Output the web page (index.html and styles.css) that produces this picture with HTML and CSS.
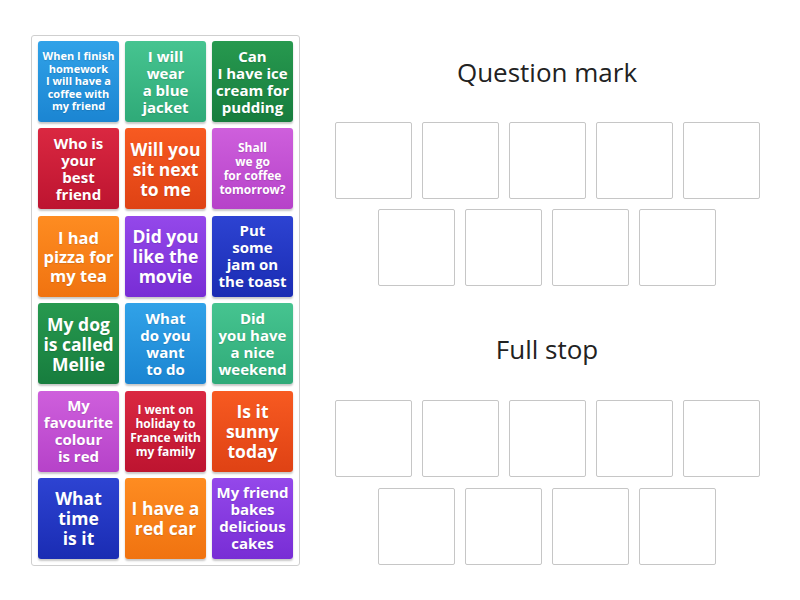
FILE: index.html
```html
<!DOCTYPE html>
<html lang="en">
<head>
    <meta charset="UTF-8">
    <meta name="viewport" content="width=device-width, initial-scale=1.0">
    <title>Question mark or full stop</title>
    <link rel="stylesheet" href="styles.css">
</head>
<body>
    <div class="activity">
        <div class="tray">
            <div class="card blue fit-xs">When I finish<br>homework<br>I will have a<br>coffee with<br>my friend</div>
            <div class="card teal fit-md">I will<br>wear<br>a blue<br>jacket</div>
            <div class="card forest fit-md">Can<br>I have ice<br>cream for<br>pudding</div>

            <div class="card crimson fit-md">Who is<br>your<br>best<br>friend</div>
            <div class="card flame fit-xl">Will you<br>sit next<br>to me</div>
            <div class="card orchid fit-sm">Shall<br>we go<br>for coffee<br>tomorrow?</div>

            <div class="card orange fit-lg">I had<br>pizza for<br>my tea</div>
            <div class="card purple fit-xl">Did you<br>like the<br>movie</div>
            <div class="card navy fit-md">Put<br>some<br>jam on<br>the toast</div>

            <div class="card forest fit-xl">My dog<br>is called<br>Mellie</div>
            <div class="card blue fit-md">What<br>do you<br>want<br>to do</div>
            <div class="card teal fit-md">Did<br>you have<br>a nice<br>weekend</div>

            <div class="card orchid fit-md">My<br>favourite<br>colour<br>is red</div>
            <div class="card crimson fit-sm">I went on<br>holiday to<br>France with<br>my family</div>
            <div class="card flame fit-xl">Is it<br>sunny<br>today</div>

            <div class="card navy fit-xl">What<br>time<br>is it</div>
            <div class="card orange fit-xl">I have a<br>red car</div>
            <div class="card purple fit-md">My friend<br>bakes<br>delicious<br>cakes</div>
        </div>

        <div class="groups">
            <div class="group">
                <h2 class="group-title">Question mark</h2>
                <div class="slots">
                    <div class="slot-row">
                        <div class="slot"></div>
                        <div class="slot"></div>
                        <div class="slot"></div>
                        <div class="slot"></div>
                        <div class="slot"></div>
                    </div>
                    <div class="slot-row">
                        <div class="slot"></div>
                        <div class="slot"></div>
                        <div class="slot"></div>
                        <div class="slot"></div>
                    </div>
                </div>
            </div>
            <div class="group">
                <h2 class="group-title">Full stop</h2>
                <div class="slots">
                    <div class="slot-row">
                        <div class="slot"></div>
                        <div class="slot"></div>
                        <div class="slot"></div>
                        <div class="slot"></div>
                        <div class="slot"></div>
                    </div>
                    <div class="slot-row">
                        <div class="slot"></div>
                        <div class="slot"></div>
                        <div class="slot"></div>
                        <div class="slot"></div>
                    </div>
                </div>
            </div>
        </div>
    </div>
</body>
</html>
```

FILE: styles.css
```css
body {
    margin: 0;
    font-family: "Open Sans", "DejaVu Sans", sans-serif;
    background: #fff;
    color: #222;
}
.activity {
    display: flex;
    align-items: flex-start;
    padding: 35px 0 0 31px;
}

/* card tray on the left */
.tray {
    display: grid;
    grid-template-columns: repeat(3, 81px);
    grid-auto-rows: 81px;
    gap: 6.4px 6px;
    padding: 5px 6px 6px 6px;
    border: 1px solid #cfcfcf;
    border-radius: 3px;
}
.card {
    display: flex;
    align-items: center;
    justify-content: center;
    text-align: center;
    color: #fff;
    font-weight: 700;
    white-space: nowrap;
    border-radius: 3px;
    box-shadow: 0 2px 2px rgba(0,0,0,0.22);
    text-shadow: 0 1px 1px rgba(0,0,0,0.12);
}
/* text is shrunk to fit the card */
.fit-xs { font-size: 11px; line-height: 12.5px; }
.fit-sm { font-size: 12px; line-height: 14px; }
.fit-md { font-size: 15px; line-height: 17px; }
.fit-lg { font-size: 16.5px; line-height: 19px; }
.fit-xl { font-size: 17.5px; line-height: 20px; }

.blue    { background: linear-gradient(#31a2e8, #1b85d2); }
.teal    { background: linear-gradient(#46c490, #2faa78); }
.forest  { background: linear-gradient(#27994f, #177d3e); }
.crimson { background: linear-gradient(#da2841, #bd1430); }
.flame   { background: linear-gradient(#f75a21, #df4214); }
.orchid  { background: linear-gradient(#ce5fdc, #b642c9); }
.orange  { background: linear-gradient(#fe8c21, #f07310); }
.purple  { background: linear-gradient(#9448ea, #782dd5); }
.navy    { background: linear-gradient(#2d43d2, #1a2cb3); }

/* drop zones on the right */
.groups {
    flex: 1;
    padding: 19px 6px 0 0;
}
.group + .group {
    margin-top: 45px;
}
.group + .group .group-title {
    margin-bottom: 33px;
}
.group + .group .slots {
    gap: 11px;
}
.group-title {
    margin: 0 0 32px 0;
    font-size: 26px;
    font-weight: 400;
    line-height: 36px;
    text-align: center;
    color: #222;
}
.slots {
    display: flex;
    flex-direction: column;
    gap: 10px;
}
.slot-row {
    display: flex;
    justify-content: center;
    gap: 10px;
}
.slot {
    width: 77px;
    height: 77px;
    box-sizing: border-box;
    border: 1px solid #c6c6c6;
    border-radius: 2px;
    background: #fff;
}
```
